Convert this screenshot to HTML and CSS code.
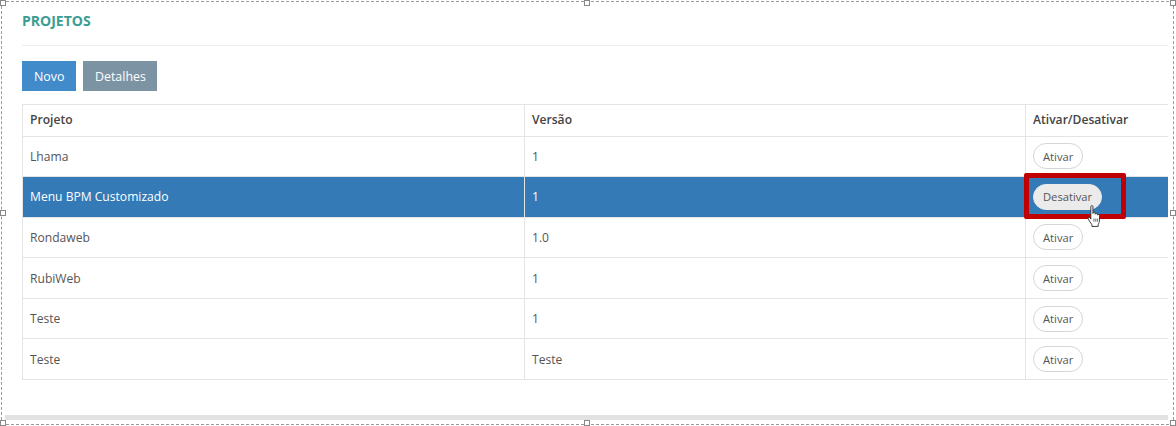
FILE: index.html
```html
<!DOCTYPE html>
<html lang="en">
  <head>
    <meta charset="UTF-8" />
    <title>Projetos</title>
    <link rel="stylesheet" href="styles.css">
  </head>
  <body>
    <div class="page">
      <div class="content">
        <h2 class="title">PROJETOS</h2>

        <div class="actions">
          <button class="btn btn-new">Novo</button>
          <button class="btn btn-details">Detalhes</button>
        </div>

        <table class="projects">
          <colgroup>
            <col class="col-project">
            <col class="col-version">
            <col class="col-toggle">
          </colgroup>
          <thead>
            <tr>
              <th>Projeto</th>
              <th>Versão</th>
              <th>Ativar/Desativar</th>
            </tr>
          </thead>
          <tbody>
            <tr>
              <td>Lhama</td>
              <td>1</td>
              <td><button class="pill">Ativar</button></td>
            </tr>
            <tr class="selected">
              <td>Menu BPM Customizado</td>
              <td>1</td>
              <td><button class="pill">Desativar</button></td>
            </tr>
            <tr>
              <td>Rondaweb</td>
              <td>1.0</td>
              <td><button class="pill">Ativar</button></td>
            </tr>
            <tr>
              <td>RubiWeb</td>
              <td>1</td>
              <td><button class="pill">Ativar</button></td>
            </tr>
            <tr>
              <td>Teste</td>
              <td>1</td>
              <td><button class="pill">Ativar</button></td>
            </tr>
            <tr>
              <td>Teste</td>
              <td>Teste</td>
              <td><button class="pill">Ativar</button></td>
            </tr>
          </tbody>
        </table>
      </div>
      <div class="scrollbar"></div>
    </div>

    <!-- annotation layer, drawn over the screenshot -->
    <div class="frame"></div>
    <span class="handle handle-tl"></span>
    <span class="handle handle-tm"></span>
    <span class="handle handle-tr"></span>
    <span class="handle handle-ml"></span>
    <span class="handle handle-mr"></span>
    <span class="handle handle-bl"></span>
    <span class="handle handle-bm"></span>
    <span class="handle handle-br"></span>
    <div class="highlight"></div>
    <svg class="cursor" width="15" height="23" viewBox="0 0 14 22">
      <path d="M3.500 1.500c0-1.200 2-1.200 2 0v6.500c.3-1.200 2.200-1 2.200.2v.6c.3-1.100 2.100-.9 2.100.3v.6c.4-1 2-.7 2 .5v4.300c0 2-.8 2.900-1.300 4.300v1.700H4.500v-1.700C3.500 17 2 15.500 1 13.500c-.6-1.200.8-2.200 1.600-1.200l.9 1.200z" fill="#fff" stroke="#333" stroke-width="0.9" stroke-linejoin="round"/>
      <path d="M6.500 13v3M8.300 13v3M10 13v3" stroke="#333" stroke-width="0.7" fill="none"/>
    </svg>
  </body>
</html>
```

FILE: styles.css
```css
body {
  margin: 0;
  width: 1176px;
  height: 426px;
  overflow: hidden;
  background: #fff;
  font-family: "Open Sans", sans-serif;
  font-size: 12.100px;
  color: #555;
}

.page {
  padding: 11px 8px 0 22px;
}

.content {
  height: 404px;
  overflow: hidden;
}

.title {
  margin: 0;
  height: 34px;
  border-bottom: 1px solid #eee;
  color: #3a9d93;
  font-size: 14px;
  font-weight: 700;
  line-height: 20px;
}

.actions {
  display: flex;
  gap: 7px;
  margin: 15px 0 13px;
}

.btn {
  height: 30px;
  padding: 0 12px;
  border: none;
  color: #fff;
  font-family: inherit;
  font-size: 12.400px;
}

.btn-new {
  width: 54px;
  background: #428bca;
}

.btn-details {
  width: 74px;
  background: #7c93a3;
}

.projects {
  width: 1150px;
  table-layout: fixed;
  border-collapse: collapse;
  border: 1px solid #ddd;
}

.col-project {
  width: 502px;
}

.col-version {
  width: 501px;
}

.projects th,
.projects td {
  padding: 0 7px;
  border: 1px solid #e4e4e4;
  text-align: left;
}

.projects th {
  height: 29.500px;
  padding-bottom: 1px;
  color: #444;
  font-size: 12.100px;
  font-weight: 600;
}

.projects td {
  height: 39.600px;
}

.selected td {
  background: #337ab7;
  color: #fff;
}

.pill {
  display: block;
  height: 26px;
  padding: 0 9px;
  border: 1px solid #d6d6d6;
  border-radius: 13px;
  background: #fff;
  color: #555;
  font-family: inherit;
  font-size: 11.200px;
}

.selected .pill {
  background: #ebebeb;
  border-color: #ebebeb;
}

.scrollbar {
  height: 5px;
  margin-left: -17px;
  background: #e2e2e2;
}

.frame {
  position: absolute;
  left: 1px;
  top: 1px;
  width: 1171px;
  height: 422px;
  border: 1px dashed #9a9a9a;
}

.handle {
  position: absolute;
  width: 4px;
  height: 4px;
  border: 1px solid #888;
  background: #fff;
}

.handle-tl { left: 0; top: 0; }
.handle-tm { left: 584px; top: 0; }
.handle-tr { left: 1170px; top: 0; }
.handle-ml { left: 0; top: 210px; }
.handle-mr { left: 1170px; top: 210px; }
.handle-bl { left: 0; top: 420px; }
.handle-bm { left: 584px; top: 420px; }
.handle-br { left: 1170px; top: 420px; }

.highlight {
  position: absolute;
  left: 1024px;
  top: 173px;
  width: 92px;
  height: 36px;
  border: 5px solid #c00000;
  border-radius: 2px;
}

.cursor {
  position: absolute;
  left: 1087px;
  top: 205px;
}
```
